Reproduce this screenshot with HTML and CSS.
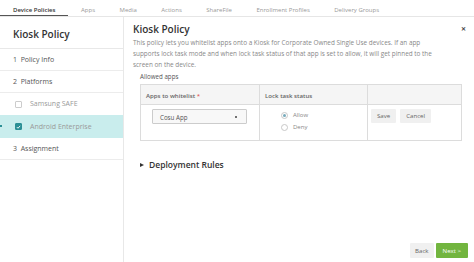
FILE: index.html
```html
<!DOCTYPE html>
<html lang="en">
<head>
    <meta charset="UTF-8">
    <title>Kiosk Policy</title>
    <link rel="stylesheet" href="styles.css">
</head>
<body>
<div class="nav">
    <a class="active">Device Policies</a>
    <a>Apps</a>
    <a>Media</a>
    <a>Actions</a>
    <a>ShareFile</a>
    <a>Enrollment Profiles</a>
    <a>Delivery Groups</a>
</div>
<div class="page">
    <div class="side">
        <div class="side-title">Kiosk Policy</div>
        <div class="step">1&nbsp; Policy Info</div>
        <div class="step">2&nbsp; Platforms</div>
        <div class="step sub"><span class="box"></span>Samsung SAFE</div>
        <div class="step sub on"><span class="box checked">
            <svg width="6" height="6" viewBox="0 0 6 6"><path d="M1 3.1 L2.4 4.5 L5 1.6" fill="none" stroke="#fff" stroke-width="1.1"/></svg>
        </span>Android Enterprise</div>
        <div class="step">3&nbsp; Assignment</div>
    </div>
    <div class="main">
        <div class="head">
            <h1>Kiosk Policy</h1>
            <span class="close">&#x2715;</span>
        </div>
        <p class="desc">This policy lets you whitelist apps onto a Kiosk for Corporate Owned Single Use devices. If an app supports lock task mode and when lock task status of that app is set to allow, it will get pinned to the screen on the device.</p>
        <div class="label">Allowed apps</div>
        <div class="grid">
            <div class="th">Apps to whitelist <span class="req">*</span></div>
            <div class="th">Lock task status</div>
            <div class="th"></div>
            <div class="td">
                <div class="select">Cosu App <span class="caret"></span></div>
            </div>
            <div class="td radios">
                <label><span class="radio sel"></span>Allow</label>
                <label><span class="radio"></span>Deny</label>
            </div>
            <div class="td acts">
                <span class="btn">Save</span>
                <span class="btn">Cancel</span>
            </div>
        </div>
        <div class="rules"><span class="tri"></span>Deployment Rules</div>
        <div class="foot">
            <span class="btn back">Back</span>
            <span class="btn next">Next &gt;</span>
        </div>
    </div>
</div>
</body>
</html>
```
FILE: styles.css
```css
*{
    margin: 0;
    padding: 0;
    box-sizing: border-box;
}
body{
    width: 474px;
    height: 262px;
    font-family: "Open Sans", "Noto Sans", sans-serif;
    color: #444;
    background: #fff;
    overflow: hidden;
}
.nav{
    display: flex;
    height: 17px;
    border-bottom: 1px solid #e6e6e6;
    font-size: 6px;
    color: #999;
}
.nav a{
    padding: 6px 12px 0 12.5px;
    white-space: nowrap;
}
.nav a:nth-child(2){ padding-left: 13px; }
.nav a.active{
    color: #333;
    font-weight: 600;
    padding-left: 13px;
    width: 68px;
    border-bottom: 1.5px solid #555;
}
.page{
    display: flex;
    height: 245px;
}
.side{
    width: 124px;
    border-right: 1px solid #e8e8e8;
    flex-shrink: 0;
}
.side-title{
    font-size: 10px;
    font-weight: 600;
    color: #333;
    height: 32px;
    padding: 10px 0 0 13px;
    border-bottom: 1px solid #e8e8e8;
}
.step{
    height: 22px;
    line-height: 22px;
    font-size: 7px;
    padding-left: 13px;
    color: #555;
    border-bottom: 1px solid #ececec;
    display: flex;
    align-items: center;
}
.step.sub{
    padding-left: 15px;
    color: #999;
    border-bottom: none;
}
.step.sub.on{
    background: #c9eded;
    position: relative;
    height: 23px;
}
.step.sub.on::before{
    content: "";
    position: absolute;
    left: 0;
    top: 10px;
    width: 2px;
    height: 2px;
    background: #2b8f95;
}
.box{
    width: 7px;
    height: 7px;
    border: 1px solid #ccc;
    border-radius: 1px;
    margin-right: 8px;
    display: inline-flex;
    align-items: center;
    justify-content: center;
}
.box.checked{
    background: #2b8f95;
    border-color: #2b8f95;
}
.main{
    flex: 1;
    padding: 5px 6px 0 9px;
    display: flex;
    flex-direction: column;
}
.head{
    display: flex;
    justify-content: space-between;
    align-items: center;
    padding-right: 2px;
}
h1{
    font-size: 10px;
    font-weight: 600;
    color: #333;
}
.close{
    font-size: 6px;
    font-weight: 700;
    color: #444;
}
.desc{
    font-size: 6.4px;
    line-height: 11px;
    color: #888;
    margin-top: 1px;
    width: 300px;
}
.label{
    font-size: 6.2px;
    color: #555;
    margin: 2px 0 3px 7px;
}
.grid{
    margin-left: 7px;
    width: 322px;
    display: grid;
    grid-template-columns: 118px 108px 1fr;
    grid-template-rows: 20px 35px;
    border: 1px solid #dcdcdc;
}
.th{
    background: #f5f5f5;
    border-bottom: 1px solid #dcdcdc;
    font-size: 6.1px;
    font-weight: 600;
    color: #666;
    padding: 6px 0 0 5px;
}
.th + .th, .td + .td{
    border-left: 1px solid #dcdcdc;
}
.req{
    color: #d44;
    font-weight: 400;
}
.td{
    padding-top: 4px;
}
.select{
    margin-left: 11px;
    width: 95px;
    height: 15px;
    border: 1px solid #ccc;
    border-radius: 1px;
    background: #f8f8f8;
    font-size: 6.2px;
    color: #555;
    padding: 3px 0 0 7px;
    position: relative;
}
.caret{
    position: absolute;
    right: 9px;
    top: 6px;
    width: 2px;
    height: 2px;
    background: #444;
    border-radius: 1px;
}
.radios{
    padding: 6px 0 0 21px;
    display: flex;
    flex-direction: column;
    gap: 4px;
    font-size: 6px;
    color: #888;
}
.radios label{
    display: flex;
    align-items: center;
}
.radio{
    width: 7px;
    height: 7px;
    border-radius: 50%;
    border: 1px solid #c8c8c8;
    margin-right: 5px;
    position: relative;
}
.radio.sel::after{
    content: "";
    position: absolute;
    left: 1px;
    top: 1px;
    width: 3px;
    height: 3px;
    border-radius: 50%;
    background: #7ab;
}
.acts{
    display: flex;
    gap: 4px;
    padding-left: 3px;
}
.btn{
    display: inline-block;
    height: 14px;
    line-height: 14px;
    font-size: 6.1px;
    color: #666;
    background: #f0f0f0;
    padding: 0 6px;
    border-radius: 1px;
}
.rules{
    margin: 18px 0 0 7px;
    font-size: 8.5px;
    font-weight: 600;
    color: #333;
    display: flex;
    align-items: center;
}
.tri{
    width: 0;
    height: 0;
    border-left: 4px solid #333;
    border-top: 2.5px solid transparent;
    border-bottom: 2.5px solid transparent;
    margin-right: 5px;
}
.foot{
    margin-top: auto;
    margin-bottom: 4px;
    display: flex;
    justify-content: flex-end;
    gap: 2px;
}
.foot .btn{
    height: 15px;
    line-height: 15px;
    padding: 0 5px;
}
.foot .next{
    background: #72b53f;
    color: #fff;
    padding: 0 7px;
}
```
